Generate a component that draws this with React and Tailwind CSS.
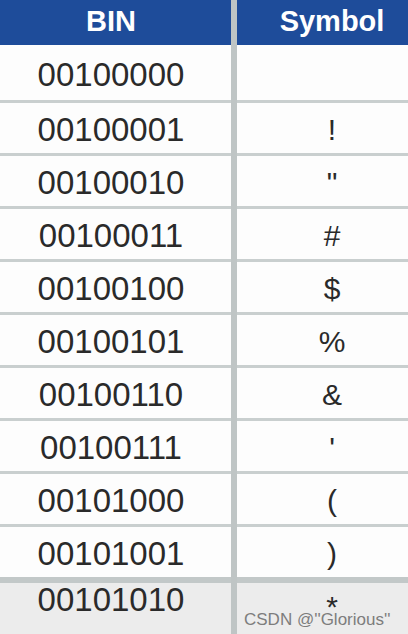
import React from 'react'

const rows = [
  ['00100000', ''],
  ['00100001', '!'],
  ['00100010', '"'],
  ['00100011', '#'],
  ['00100100', '$'],
  ['00100101', '%'],
  ['00100110', '&'],
  ['00100111', "'"],
  ['00101000', '('],
  ['00101001', ')'],
]

const font = { fontFamily: '"Liberation Sans", Arial, sans-serif' }

const Cell = ({ text, first, size }) => (
  <div
    className={
      first
        ? 'h-[55px] flex items-center justify-center pt-[4px] bg-[#fdfdfd]'
        : 'h-[53px] border-t-[3px] border-[#c9cfcf] flex items-center justify-center pt-[3px] bg-[#fdfdfd]'
    }
  >
    <span className={size + ' leading-none text-[#2a2a2a]'}>{text}</span>
  </div>
)

const App = () => {
  return (
    <div className="w-[408px] h-[634px] overflow-hidden bg-white" style={font}>
      <div className="flex -ml-[9px] w-[436px]">
        {/* BIN column */}
        <div className="w-[240px] flex flex-col">
          <div className="h-[45px] bg-[#1e4c9a] flex items-center justify-center pb-[2px]">
            <span className="text-white font-bold text-[29px] leading-none">BIN</span>
          </div>
          {rows.map(([bin], i) => (
            <Cell key={bin} text={bin} first={i === 0} size="text-[33px]" />
          ))}
          <div className="h-[57px] border-t-[6px] border-[#c2c8c8] bg-[#ececec] flex justify-center">
            <span className="text-[33px] leading-none text-[#2a2a2a]">00101010</span>
          </div>
        </div>

        {/* divider */}
        <div className="w-[6px] bg-[#bfc5c5]" />

        {/* Symbol column */}
        <div className="w-[190px] flex flex-col">
          <div className="h-[45px] bg-[#1e4c9a] flex items-center justify-center pb-[2px]">
            <span className="text-white font-bold text-[29px] leading-none">Symbol</span>
          </div>
          {rows.map(([bin, sym], i) => (
            <Cell key={bin} text={sym} first={i === 0} size="text-[30px]" />
          ))}
          <div className="relative h-[57px] border-t-[6px] border-[#c2c8c8] bg-[#ececec] flex justify-center">
            <span className="text-[30px] leading-[8px] h-[8px] mt-[20px] text-[#2a2a2a]">*</span>
            <span className="absolute left-[7px] top-[28px] text-[17px] leading-none text-[#7d7d7d] whitespace-nowrap">
              CSDN @''Glorious''
            </span>
          </div>
        </div>
      </div>
    </div>
  )
}

export default App
